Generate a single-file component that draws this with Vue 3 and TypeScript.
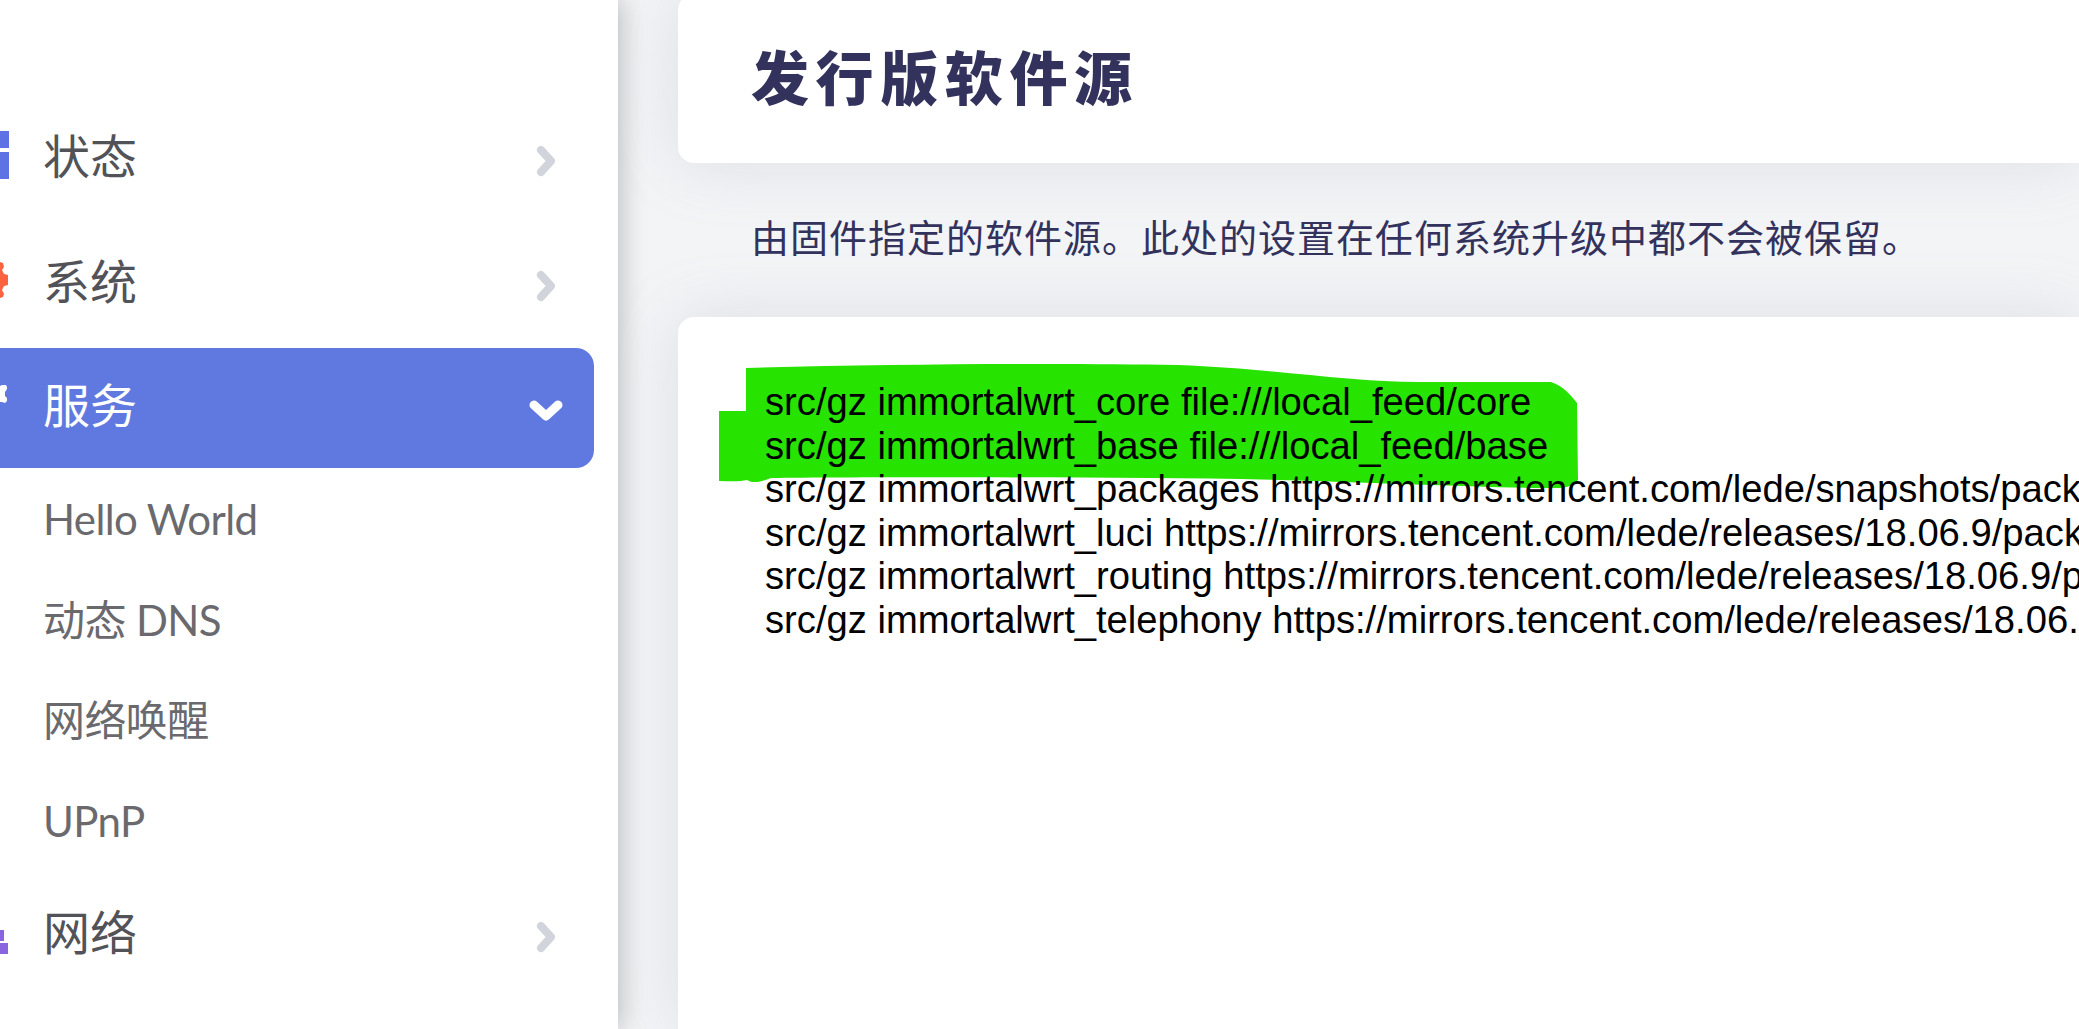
<script setup lang="ts">
interface NavItem { label: string; tone: string; open?: boolean; subs?: string[] }
const nav: NavItem[] = [
  { label: '状态', tone: 'status' },
  { label: '系统', tone: 'system' },
  { label: '服务', tone: 'service', open: true, subs: ['Hello World', '动态 DNS', '网络唤醒', 'UPnP'] },
  { label: '网络', tone: 'network' }
]
const feeds: string[] = [
  'src/gz immortalwrt_core file:///local_feed/core',
  'src/gz immortalwrt_base file:///local_feed/base',
  'src/gz immortalwrt_packages https://mirrors.tencent.com/lede/snapshots/packages/x86_64/packages',
  'src/gz immortalwrt_luci https://mirrors.tencent.com/lede/releases/18.06.9/packages/x86_64/luci',
  'src/gz immortalwrt_routing https://mirrors.tencent.com/lede/releases/18.06.9/packages/x86_64/routing',
  'src/gz immortalwrt_telephony https://mirrors.tencent.com/lede/releases/18.06.9/packages/x86_64/telephony'
]
</script>

<template>
  <div class="page">
    <aside class="sidebar">
      <ul class="menu">
        <li v-for="item in nav" :key="item.label" class="group" :class="item.tone">
          <div class="head" :class="{ active: item.open }">
            <svg class="icon" viewBox="0 0 10 60" width="10" height="60" aria-hidden="true">
              <g v-if="item.tone === 'status'" fill="#5e72e4">
                <rect x="0" y="3" width="9" height="17" />
                <rect x="0" y="24" width="9" height="27" />
              </g>
              <path
                v-else-if="item.tone === 'system'"
                fill="#fb6340"
                d="M0 9 L3 10 L4 14 L2 17 L4 21 L8 22 L8 32 L4 33 L2 37 L4 41 L3 44 L0 45 Z"
              />
              <path
                v-else-if="item.tone === 'service'"
                fill="#fff"
                d="M0 8 L2 7 L6 7 L7 9 L7 11 L5 14 L5 18 L7 20 L7 23 L5 25 L2 24 L0 24 Z"
              />
              <g v-else fill="#8965e0">
                <rect x="0" y="26" width="4" height="11" />
                <rect x="0" y="39" width="8" height="11" />
              </g>
            </svg>
            <span class="label">{{ item.label }}</span>
            <svg class="chev" viewBox="0 0 24 32" width="24" height="32" aria-hidden="true">
              <path v-if="item.open" d="M0 10 L12 21 L24 10" class="chev-line open" />
              <path v-else d="M7 5 L17 16 L7 27" class="chev-line" />
            </svg>
          </div>
          <ul v-if="item.subs" class="subs">
            <li v-for="s in item.subs" :key="s">{{ s }}</li>
          </ul>
        </li>
      </ul>
    </aside>
    <main class="content">
      <header class="card title-card">
        <h2>发行版软件源</h2>
      </header>
      <p class="desc">由固件指定的软件源。此处的设置在任何系统升级中都不会被保留。</p>
      <section class="card feed-card">
        <svg class="marker" viewBox="0 0 1000 200" width="1000" height="200" aria-hidden="true">
          <path
            fill="#27e300"
            d="M87 51 C230 47 400 46 519 48 C620 52 690 65 760 65 L892 65 C904 69 912 78 918 86 L919 163 C914 169 907 171 898 171 C800 171 640 161 490 161 C340 160 190 160 112 161 C100 166 92 166 88 163 C80 165 70 164 60 164 L60 94 L87 94 Z"
          />
        </svg>
        <pre class="feeds">{{ feeds.join('\n') }}</pre>
      </section>
    </main>
  </div>
</template>

<style>
html, body { margin: 0; height: 100%; overflow: hidden; background: #f3f4f6; }
</style>

<style scoped>
.page {
  display: flex;
  width: 2079px;
  height: 1029px;
  overflow: hidden;
  background: #f3f4f6;
  font-family: "Lato", "Noto Sans CJK SC", sans-serif;
}
.sidebar {
  flex: 0 0 618px;
  background: #fff;
  box-shadow: 4px 0 24px rgba(0, 0, 0, .22);
  padding-top: 98px;
  box-sizing: border-box;
  position: relative;
  z-index: 2;
}
.menu, .subs { list-style: none; margin: 0; padding: 0; }
.head {
  display: flex;
  align-items: center;
  width: 594px;
  height: 120px;
  box-sizing: border-box;
  margin-bottom: 5px;
  font-size: 47px;
  color: #525259;
  font-family: "Noto Sans CJK SC", sans-serif;
  border-radius: 0 18px 18px 0;
}
.group.network .head { margin-top: 2px; }
.head.active { background: #6079e0; color: #fff; margin-bottom: 0; }
.icon { flex: none; }
.label { margin: 0 0 10px 33px; flex: 1; line-height: 1; }
.head.active .label { margin-bottom: 12px; }
.chev { margin: 6px 36px 0 0; flex: none; overflow: visible; }
.chev-line { fill: none; stroke: #d1d5db; stroke-width: 8; stroke-linejoin: round; stroke-linecap: round; }
.chev-line.open { stroke: #fff; stroke-width: 9; }
.subs { padding: 2px 0 0 43px; font-size: 42px; letter-spacing: -0.6px; color: #6a6a6e; }
.subs li { height: 100.5px; line-height: 98px; white-space: nowrap; }
.content {
  flex: 1;
  min-width: 0;
  padding-left: 60px;
  display: flex;
  flex-direction: column;
}
.card {
  background: #fff;
  box-shadow: 0 0 64px rgba(136, 152, 170, .22);
}
.title-card {
  flex: none;
  height: 169px;
  margin-top: -6px;
  box-sizing: border-box;
  border-radius: 16px 0 0 16px;
  padding: 0 0 7px 73px;
  display: flex;
  align-items: center;
}
.title-card h2 {
  margin: 0;
  font-size: 58px;
  letter-spacing: 6.6px;
  font-weight: 900;
  color: #32325d;
  font-family: "Noto Sans CJK SC", sans-serif;
}
.desc {
  margin: 0;
  flex: none;
  height: 154px;
  line-height: 146px;
  padding-left: 73px;
  font-size: 38px;
  letter-spacing: 1px;
  color: #32325d;
  font-family: "Noto Sans CJK SC", sans-serif;
  white-space: nowrap;
}
.feed-card {
  flex: 1;
  border-radius: 16px 0 0 0;
  position: relative;
  overflow: hidden;
  padding: 63px 0 0 87px;
}
.marker { position: absolute; left: -19px; top: 0; }
.feeds {
  position: relative;
  margin: 0;
  font-family: "Liberation Sans", Arial, sans-serif;
  font-size: 38.2px;
  line-height: 43.6px;
  color: #000;
  white-space: pre;
}
</style>
